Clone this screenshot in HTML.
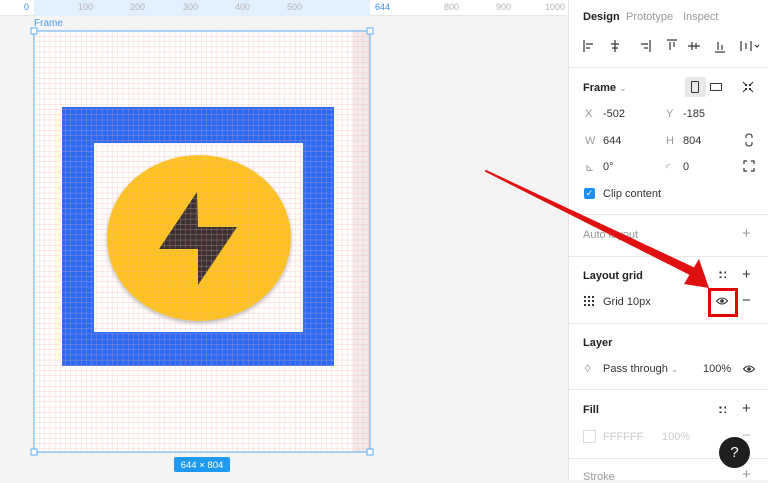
<!DOCTYPE html>
<html><head><meta charset="utf-8"><style>
*{margin:0;padding:0;box-sizing:border-box}
body{width:768px;height:480px;overflow:hidden;background:#f4f4f4;font-family:"Liberation Sans",sans-serif;position:relative}
.abs{position:absolute}
.ruler{left:0;top:0;width:568px;height:16px;background:#fff;border-bottom:1px solid #e6e6e6}
.rn{position:absolute;top:2px;font-size:9px;color:#b3b3b3}
.panel{left:568px;top:0;width:200px;height:480px;background:#fff;border-left:1px solid #e5e5e5;font-size:11px;color:#333}
.hr{position:absolute;left:0;width:200px;height:1px;background:#e8e8e8}
.t{position:absolute;white-space:nowrap}
.b{font-weight:bold;color:#222}
.g{color:#999}
</style></head><body>
<div class="abs ruler">
<div class="abs" style="left:34px;top:0;width:336px;height:16px;background:#e2effd"></div>
<span class="rn" style="left:24px;color:#3b8ee8">0</span>
<span class="rn" style="left:78px">100</span><span class="rn" style="left:130px">200</span><span class="rn" style="left:183px">300</span><span class="rn" style="left:235px">400</span><span class="rn" style="left:287px">500</span>
<span class="rn" style="left:375px;color:#3b8ee8">644</span>
<span class="rn" style="left:444px">800</span><span class="rn" style="left:496px">900</span><span class="rn" style="left:545px">1000</span>
</div>
<div class="t" style="left:34px;top:18px;font-size:10px;color:#4a9ae8">Frame</div>
<svg class="abs" style="left:0;top:0" width="568" height="480">
<defs><pattern id="gr" x="34" y="31" width="5.22" height="5.22" patternUnits="userSpaceOnUse"><path d="M0 0H5.22M0 0V5.22" stroke="#f7a8a8" stroke-width="0.6" fill="none" opacity="0.75"/></pattern>
<filter id="sh"><feDropShadow dx="0" dy="2" stdDeviation="2" flood-opacity="0.3"/></filter></defs>
<rect x="34" y="31" width="336" height="421" fill="#fff"/>
<rect x="353" y="31" width="17" height="421" fill="#f3eaea"/>
<rect x="62" y="107" width="272" height="259" fill="#2b6af5"/>
<rect x="94" y="143" width="209" height="189" fill="#fff"/>
<ellipse cx="199" cy="238" rx="92" ry="83" fill="#fcc41e" filter="url(#sh)"/>
<path d="M197 192L159 249H198V285L237 227H198Z" fill="#3a3232"/>
<rect x="34" y="31" width="336" height="421" fill="url(#gr)"/>
<rect x="34" y="31" width="336" height="421" fill="none" stroke="#5aabf5" stroke-width="1"/>
<rect x="31" y="28" width="6" height="6" fill="#fff" stroke="#5aabf5"/>
<rect x="367" y="28" width="6" height="6" fill="#fff" stroke="#5aabf5"/>
<rect x="31" y="449" width="6" height="6" fill="#fff" stroke="#5aabf5"/>
<rect x="367" y="449" width="6" height="6" fill="#fff" stroke="#5aabf5"/>
<rect x="174" y="457" width="56" height="15" rx="2" fill="#1e9bf0"/>
<text x="202" y="468" font-size="9.5" fill="#fff" text-anchor="middle" font-family="Liberation Sans">644 × 804</text>
</svg>
<div class="abs panel">
<div class="t b" style="left:14px;top:11px">Design</div><div class="t g" style="left:57px;top:11px">Prototype</div><div class="t g" style="left:114px;top:11px">Inspect</div>
<svg class="abs" style="left:0;top:36px" width="200" height="20" fill="none" stroke="#333" stroke-width="1.2">
<path d="M15 4V16M17 8H24M17 12H21"/>
<path d="M46 4V16M42 8H50M43 12H49"/>
<path d="M81 4V16M72 8H79M75 12H79"/>
<path d="M98 4H108M101 6V14M105 6V11"/>
<path d="M119 10H131M123 6V14M127 7V13"/>
<path d="M146 16H156M149 6V14M153 9V14"/>
<path d="M172 5V15M177 7V13M182 5V15M186 9L188 11L190 9"/>
</svg>
<div class="hr" style="top:67px"></div>
<div class="t b" style="left:14px;top:82px">Frame <span style="color:#999;font-weight:normal;font-size:9px">⌄</span></div>
<div class="abs" style="left:116px;top:77px;width:21px;height:20px;background:#e8e8e8;border-radius:2px"></div>
<div class="abs" style="left:122px;top:81px;width:8px;height:12px;border:1px solid #333;border-radius:1px"></div>
<div class="abs" style="left:141px;top:83px;width:12px;height:8px;border:1px solid #333;border-radius:1px"></div>
<svg class="abs" style="left:173px;top:81px" width="12" height="12" stroke="#333" stroke-width="1.1" fill="none"><path d="M1 1L4.5 4.5M3 4.5H4.5V3M11 1L7.5 4.5M9 4.5H7.5V3M1 11L4.5 7.5M3 7.5H4.5V9M11 11L7.5 7.5M9 7.5H7.5V9"/></svg>
<div class="t g" style="left:16px;top:108px">X</div><div class="t" style="left:34px;top:108px">-502</div>
<div class="t g" style="left:97px;top:108px">Y</div><div class="t" style="left:114px;top:108px">-185</div>
<div class="t g" style="left:16px;top:135px">W</div><div class="t" style="left:34px;top:135px">644</div>
<div class="t g" style="left:97px;top:135px">H</div><div class="t" style="left:114px;top:135px">804</div>
<svg class="abs" style="left:175px;top:133px" width="10" height="14" stroke="#333" stroke-width="1.1" fill="none"><path d="M2 5V3A3 2 0 0 1 8 3V5M2 9V11A3 2 0 0 0 8 11V9"/></svg>
<div class="t g" style="left:16px;top:161px">⊾</div><div class="t" style="left:34px;top:161px">0°</div>
<div class="t g" style="left:97px;top:161px">◜</div><div class="t" style="left:114px;top:161px">0</div>
<svg class="abs" style="left:174px;top:160px" width="12" height="12" stroke="#333" stroke-width="1.2" fill="none"><path d="M1 4V1H4M8 1H11V4M11 8V11H8M4 11H1V8"/></svg>
<div class="abs" style="left:15px;top:188px;width:11px;height:11px;background:#1e8ef0;border-radius:2px;color:#fff;font-size:9px;text-align:center;line-height:11px">✓</div>
<div class="t" style="left:34px;top:188px">Clip content</div>
<div class="hr" style="top:214px"></div>
<div class="t g" style="left:14px;top:229px">Auto layout</div><div class="t g" style="left:173px;top:225px;font-size:15px">+</div>
<div class="hr" style="top:256px"></div>
<div class="t b" style="left:14px;top:270px">Layout grid</div>
<div class="t" style="left:149px;top:270px;width:8px;height:8px;background:radial-gradient(circle,#333 1.1px,transparent 1.3px) 0 0/5px 5px"></div>
<div class="t" style="left:173px;top:266px;font-size:15px">+</div>
<div class="t" style="left:14px;top:295px;width:12px;height:12px;background:radial-gradient(circle,#333 1.1px,transparent 1.3px) 0 0/4px 4px"></div>
<div class="t" style="left:34px;top:296px">Grid 10px</div>
<svg class="abs" style="left:147px;top:297px" width="12" height="8"><path d="M0.5 4Q6 -2 11.5 4Q6 10 0.5 4Z" fill="none" stroke="#333"/><circle cx="6" cy="4" r="1.8" fill="#333"/></svg>
<div class="t" style="left:173px;top:292px;font-size:15px">−</div>
<div class="hr" style="top:323px"></div>
<div class="t b" style="left:14px;top:337px">Layer</div>
<div class="t g" style="left:16px;top:363px">◊</div><div class="t" style="left:34px;top:363px">Pass through <span class="g" style="font-size:9px">⌄</span></div>
<div class="t" style="left:134px;top:363px">100%</div>
<svg class="abs" style="left:174px;top:365px" width="12" height="8"><path d="M0.5 4Q6 -2 11.5 4Q6 10 0.5 4Z" fill="none" stroke="#333"/><circle cx="6" cy="4" r="1.8" fill="#333"/></svg>
<div class="hr" style="top:389px"></div>
<div class="t b" style="left:14px;top:404px">Fill</div>
<div class="t" style="left:149px;top:405px;width:8px;height:8px;background:radial-gradient(circle,#333 1.1px,transparent 1.3px) 0 0/5px 5px"></div>
<div class="t" style="left:173px;top:400px;font-size:15px">+</div>
<div class="abs" style="left:14px;top:430px;width:13px;height:13px;border:1px solid #ddd"></div>
<div class="t" style="left:34px;top:431px;color:#ccc">FFFFFF</div><div class="t" style="left:93px;top:431px;color:#ccc">100%</div>
<div class="t" style="left:173px;top:427px;font-size:15px;color:#bbb">−</div>
<div class="hr" style="top:458px"></div>
<div class="t g" style="left:14px;top:471px">Stroke</div><div class="t g" style="left:173px;top:466px;font-size:15px">+</div>
<div class="abs" style="left:150px;top:437px;width:31px;height:31px;border-radius:50%;background:#1e1e1e;color:#fff;font-size:15px;text-align:center;line-height:31px">?</div>
</div>
<svg class="abs" style="left:0;top:0" width="768" height="480">
<path d="M486 171L690 274L693 268L486 171Z" fill="#e01010" stroke="#e01010" stroke-width="2" stroke-linejoin="round"/>
<path d="M709 288L684 284L699 259Z" fill="#e01010"/>
<rect x="709.5" y="289.5" width="27" height="26" fill="none" stroke="#e60000" stroke-width="3"/>
</svg>
</body></html>
